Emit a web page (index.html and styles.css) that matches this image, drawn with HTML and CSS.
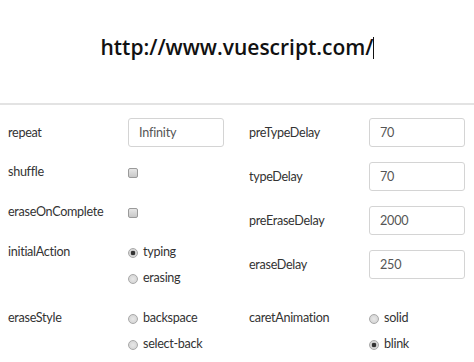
FILE: index.html
```html
<!DOCTYPE html>
<html>
<head>
<meta charset="utf-8">
<link rel="stylesheet" href="styles.css">
</head>
<body>
<div class="header">
  <span class="typed">http://www.vuescript.com/</span><span class="caret"></span>
</div>
<div class="panel">
  <div class="block">
    <div class="field field-input">
      <label class="lbl">repeat</label>
      <input class="txt" type="text" value="Infinity">
    </div>
    <div class="field field-first-check">
      <label class="lbl">shuffle</label>
      <span class="check"></span>
    </div>
    <div class="field field-check">
      <label class="lbl">eraseOnComplete</label>
      <span class="check"></span>
    </div>
    <div class="field field-check">
      <label class="lbl">initialAction</label>
      <div class="options">
        <div class="opt"><span class="radio on"></span>typing</div>
        <div class="opt"><span class="radio"></span>erasing</div>
      </div>
    </div>
  </div>
  <div class="block right">
    <div class="field field-input">
      <label class="lbl">preTypeDelay</label>
      <input class="txt" type="text" value="70">
    </div>
    <div class="field field-input gap">
      <label class="lbl">typeDelay</label>
      <input class="txt" type="text" value="70">
    </div>
    <div class="field field-input gap">
      <label class="lbl">preEraseDelay</label>
      <input class="txt" type="text" value="2000">
    </div>
    <div class="field field-input gap">
      <label class="lbl">eraseDelay</label>
      <input class="txt" type="text" value="250">
    </div>
  </div>
  <div class="block">
    <div class="field">
      <label class="lbl">eraseStyle</label>
      <div class="options">
        <div class="opt"><span class="radio"></span>backspace</div>
        <div class="opt"><span class="radio"></span>select-back</div>
      </div>
    </div>
  </div>
  <div class="block right">
    <div class="field">
      <label class="lbl">caretAnimation</label>
      <div class="options">
        <div class="opt"><span class="radio"></span>solid</div>
        <div class="opt"><span class="radio on"></span>blink</div>
      </div>
    </div>
  </div>
</div>
</body>
</html>
```

FILE: styles.css
```css
html, body {
  margin: 0;
  padding: 0;
  background: #fff;
}
body {
  font-family: Lato, "Open Sans", sans-serif;
  font-size: 12.6px;
  letter-spacing: -0.3px;
  color: #333;
  padding: 0 8px;
}
.header {
  margin: 0 -8px;
  height: 105px;
  border-bottom: 2px solid #e3e3e3;
  display: flex;
  justify-content: center;
  align-items: flex-start;
  padding-top: 33px;
  box-sizing: border-box;
}
.typed {
  font-family: "Open Sans", sans-serif;
  font-size: 21px;
  font-weight: 600;
  letter-spacing: 0;
  color: #111;
  line-height: 28px;
}
.caret {
  display: inline-block;
  width: 1px;
  height: 22px;
  background: #111;
  margin-top: 4px;
  margin-left: -1px;
}
.panel {
  display: grid;
  grid-template-columns: 241px 1fr;
  row-gap: 14px;
  padding-top: 13px;
}
.field {
  display: flex;
  align-items: flex-start;
  line-height: 26px;
}
.lbl {
  width: 120px;
  flex: none;
}
.field-input .lbl {
  line-height: 30px;
}
.field-first-check {
  margin-top: 11px;
}
.field-check {
  margin-top: 14px;
}
.gap {
  margin-top: 14px;
}
.txt {
  box-sizing: border-box;
  width: 96px;
  height: 29px;
  border: 1px solid #d4d4d4;
  border-radius: 3px;
  padding: 0 10px;
  font-family: inherit;
  font-size: 12.6px;
  letter-spacing: -0.2px;
  color: #555;
  margin: 0;
  outline: none;
}
.check {
  width: 10px;
  height: 10px;
  box-sizing: border-box;
  border: 1px solid #9a9a9a;
  border-radius: 2px;
  background: linear-gradient(#e6e6e6, #c8c8c8);
  margin-top: 9px;
}
.options {
  display: flex;
  flex-direction: column;
}
.opt {
  display: flex;
  align-items: center;
  height: 26px;
}
.radio {
  width: 10px;
  height: 10px;
  box-sizing: border-box;
  border: 1px solid #a8a8a8;
  border-radius: 50%;
  background: radial-gradient(circle, #e8e8e8 0, #cfcfcf 100%);
  margin-right: 5px;
  position: relative;
  top: 1px;
}
.radio.on {
  background: radial-gradient(circle, #333 0, #333 2px, #d0d0d0 2.6px, #e4e4e4 100%);
}
```
